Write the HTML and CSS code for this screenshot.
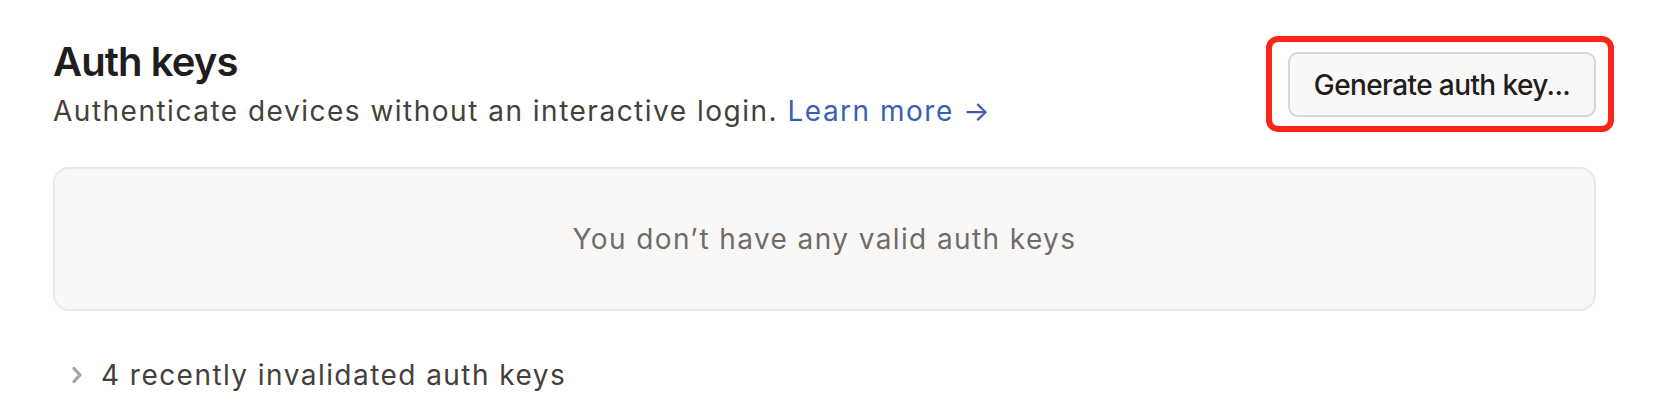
FILE: index.html
```html
<!DOCTYPE html>
<html lang="en">
<head>
<meta charset="utf-8">
<title>Auth keys</title>
<link rel="stylesheet" href="styles.css">
</head>
<body>
<main class="page">
  <section class="section">
    <header class="header">
      <div class="heading">
        <h2 class="title">Auth keys</h2>
        <p class="subtitle">Authenticate devices without an interactive login. <a class="link" href="#">Learn more →</a></p>
      </div>
      <div class="action">
        <button class="btn" type="button">Generate auth key...</button>
        <span class="highlight"></span>
      </div>
    </header>
    <div class="empty">You don’t have any valid auth keys</div>
    <div class="disclosure">
      <svg class="chevron" width="12" height="20" viewBox="0 0 12 20" aria-hidden="true"><path d="M3 3.5 L9 10 L3 16.5" fill="none" stroke="#a8a29e" stroke-width="3.2" stroke-linecap="round" stroke-linejoin="round"/></svg>
      <span class="disclosure-text">4 recently invalidated auth keys</span>
    </div>
  </section>
</main>
</body>
</html>
```

FILE: styles.css
```css
* { box-sizing: border-box; }
html, body {
  margin: 0;
  padding: 0;
  background: #ffffff;
}
body {
  font-family: Inter, "Noto Sans", "Liberation Sans", sans-serif;
  color: #1f1e1d;
  width: 1666px;
  height: 420px;
  overflow: hidden;
}
.page {
  padding: 38px 70px 0 53px;
}
.header {
  display: flex;
  justify-content: space-between;
  align-items: center;
}
.title {
  margin: 0;
  font-size: 40px;
  line-height: 48px;
  font-weight: 600;
  color: #1f1e1d;
  letter-spacing: -0.9px;
}
.subtitle {
  margin: 5px 0 0 0;
  font-size: 28px;
  line-height: 40px;
  letter-spacing: 1.5px;
  color: #44403c;
}
.link {
  color: #3a5fb6;
  text-decoration: none;
}
.action {
  position: relative;
  display: flex;
}
.btn {
  font-family: inherit;
  font-size: 28px;
  font-weight: 500;
  line-height: 40px;
  letter-spacing: -0.6px;
  height: 65px;
  width: 308px;
  padding: 0 20px;
  color: #1f1e1d;
  background: #f9f8f7;
  border: 2px solid #d8d5d3;
  border-radius: 10px;
  box-shadow: 0 1px 1px rgba(0,0,0,0.04);
  white-space: nowrap;
}
.highlight {
  position: absolute;
  left: -22px;
  top: -16px;
  right: -18px;
  bottom: -15px;
  border: 6px solid #fa2519;
  border-radius: 12px;
  pointer-events: none;
}
.empty {
  margin-top: 36px;
  height: 144px;
  display: flex;
  align-items: center;
  justify-content: center;
  background: #f9f8f7;
  border: 2px solid #ebe8e6;
  border-radius: 16px;
  font-size: 28px;
  line-height: 40px;
  letter-spacing: 1.4px;
  color: #6f6c69;
}
.disclosure {
  margin-top: 44px;
  display: flex;
  align-items: center;
  gap: 18px;
  padding-left: 18px;
}
.chevron {
  display: block;
  flex: none;
}
.disclosure-text {
  font-size: 28px;
  line-height: 40px;
  letter-spacing: 1.45px;
  color: #44403c;
}
```
